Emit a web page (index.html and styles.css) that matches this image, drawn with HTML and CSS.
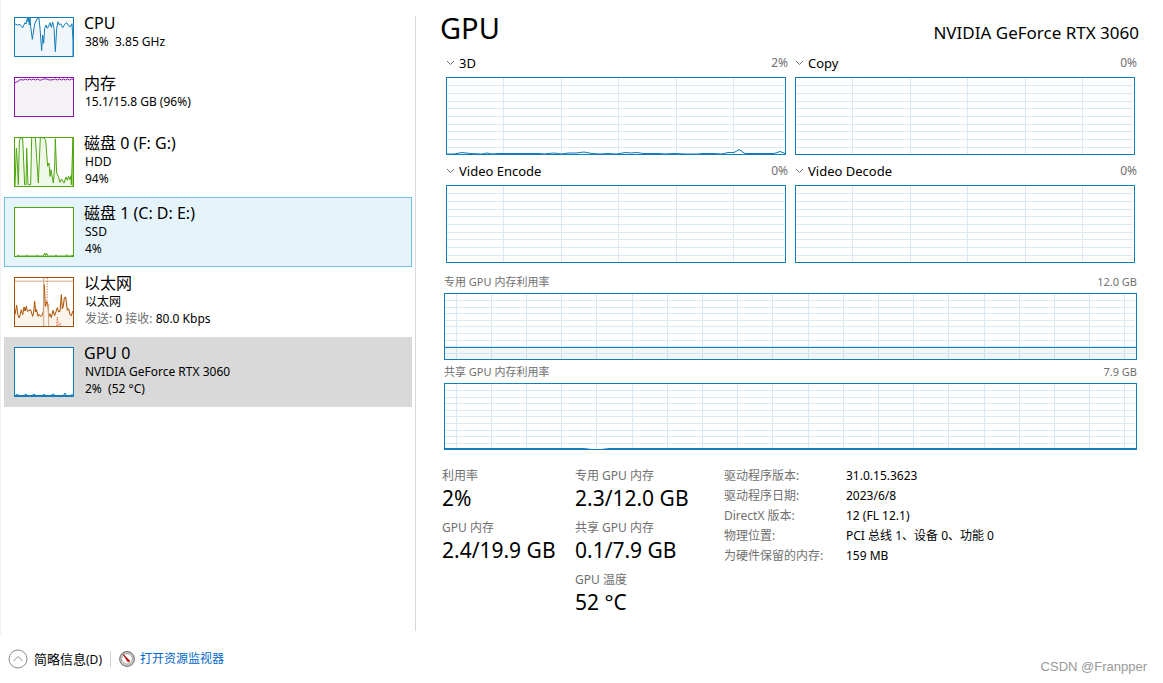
FILE: index.html
```
<!DOCTYPE html>
<html lang="zh-CN">
<head>
  <meta charset="UTF-8">
  <meta name="viewport" content="width=device-width, initial-scale=1.0">
  <title>任务管理器</title>
  <link rel="stylesheet" href="styles.css">
</head>
<body>
  <svg class="defs" aria-hidden="true">
    <defs>
      <path id="gridEngine" d="M57.5 0V78M115.5 0V78M172.5 0V78M230.5 0V78M287.5 0V78M0 8.5H338M0 16.5H338M0 24.5H338M0 31.5H338M0 39.5H338M0 47.5H338M0 54.5H338M0 62.5H338M0 70.5H338"/>
      <path id="gridMemory" d="M12.5 0V67M47.5 0V67M82.5 0V67M117.5 0V67M152.5 0V67M188.5 0V67M223.5 0V67M258.5 0V67M293.5 0V67M328.5 0V67M364.5 0V67M399.5 0V67M434.5 0V67M469.5 0V67M504.5 0V67M540.5 0V67M575.5 0V67M610.5 0V67M645.5 0V67M680.5 0V67M0 7.5H691M0 14.5H691M0 20.5H691M0 27.5H691M0 33.5H691M0 40.5H691M0 47.5H691M0 53.5H691M0 60.5H691"/>
      <path id="chevron" d="M1 1L4.5 4.5L8 1"/>
    </defs>
  </svg>

  <div class="content">
    <nav class="sidebar">
      <button type="button" class="item">
        <svg class="thumb cpu" viewBox="0 0 180 120">
          <path class="area" d="M0 19L10 24L18 22L26 32L33 17L36 21L40 4L42 14L44 2L46 24L48 2L50 29L55 67L62 21L70 4H75L78 34L83 101L86 54L89 79L92 34L96 24L100 34L104 27L108 17L112 31L116 15L120 34L124 104L128 34L132 14L136 24L140 20L146 32L152 22L158 17L164 27L170 29L174 20L177 71V120H0Z"/>
          <rect x="1.5" y="1.5" width="177" height="117"/>
        </svg>
        <span class="info">
          <span class="name">CPU</span>
          <span class="sub">38%&nbsp; 3.85 GHz</span>
        </span>
      </button>
      <button type="button" class="item">
        <svg class="thumb memory" viewBox="0 0 180 120">
          <path class="area" d="M0 19L8 15L12 13L18 8L30 9L34 6L40 9L46 6L52 9L58 6L64 9L70 6L76 9L82 9L88 6L98 6L106 9L118 8L124 6L130 9L136 6L142 9L148 6L154 9L160 6L166 9L172 6L180 8V120H0Z"/>
          <rect x="1.5" y="1.5" width="177" height="117"/>
        </svg>
        <span class="info">
          <span class="name">内存</span>
          <span class="sub">15.1/15.8 GB (96%)</span>
        </span>
      </button>
      <button type="button" class="item">
        <svg class="thumb tall disk" viewBox="0 0 180 150">
          <path class="area" d="M3 143L7 33L9 60L13 143L16 12L20 2L26 4L32 143H36L38 33L42 143H50L53 1H64L73 138L79 1L90 3L95 8L101 88L105 78L108 118L111 98L118 138L122 90L124 5L128 108L133 118L138 136L143 126L150 138L156 120L160 130L164 118L168 128L171 116L172 143L177 3V150H3Z"/>
          <rect x="1.5" y="1.5" width="177" height="147"/>
        </svg>
        <span class="info">
          <span class="name">磁盘 0 (F: G:)</span>
          <span class="sub">HDD</span>
          <span class="sub">94%</span>
        </span>
      </button>
      <button type="button" class="item hover">
        <svg class="thumb tall disk" viewBox="0 0 180 150">
          <rect class="blank" x="1.5" y="1.5" width="177" height="147"/>
          <path class="area" d="M8 147L12 144L16 147H36L40 144L44 147H66L70 144L74 147H88L92 138L95 146L98 139L101 146L104 147H122L126 144L130 147H154L158 142L162 147H170L174 144L177 147"/>
        </svg>
        <span class="info">
          <span class="name">磁盘 1 (C: D: E:)</span>
          <span class="sub">SSD</span>
          <span class="sub">4%</span>
        </span>
      </button>
      <button type="button" class="item">
        <svg class="thumb tall ethernet" viewBox="0 0 180 150">
          <path class="area" d="M0 120L4 108L8 85L12 115L16 123L22 98L26 113L30 90L33 102L37 88L40 103L45 100L50 98L56 118L59 105L62 73L65 105L68 98L72 118L76 112L80 118L84 116L88 103L91 23L94 88L98 73L102 85L104 120L108 110L112 122L117 100L122 116L130 92L134 105L138 103L142 53L145 95L148 88L151 62L155 60L160 100L164 95L168 113L172 116L176 103L180 110V150H0Z"/>
          <path class="soft" d="M3 12.500H177M89 3V147M104 80V147"/>
          <path class="dots" d="M99.500 3V90M128 147L130 120L133 147L138 138L141 147"/>
          <rect x="1.5" y="1.5" width="177" height="147"/>
        </svg>
        <span class="info">
          <span class="name">以太网</span>
          <span class="sub">以太网</span>
          <span class="sub"><span class="dim">发送:</span> 0 <span class="dim">接收:</span> 80.0 Kbps</span>
        </span>
      </button>
      <button type="button" class="item selected">
        <svg class="thumb tall cpu" viewBox="0 0 180 150">
          <rect class="blank" x="1.5" y="1.5" width="177" height="147"/>
          <path class="area" d="M3 145.500H177M3 146L10 142L16 146H30L36 141L40 146H54L60 141L66 146H84L90 142L96 146H110L118 141L124 146H148L153 138L157 146H170L176 141"/>
        </svg>
        <span class="info">
          <span class="name">GPU 0</span>
          <span class="sub">NVIDIA GeForce RTX 3060</span>
          <span class="sub">2%&nbsp; (52 °C)</span>
        </span>
      </button>
    </nav>

    <main class="detail">
      <header class="title">
        <h1>GPU</h1>
        <h2>NVIDIA GeForce RTX 3060</h2>
      </header>

      <div class="engines">
        <section class="engine">
          <div class="engine-head">
            <svg class="chevron" viewBox="0 0 9 6"><use href="#chevron"/></svg>
            <select aria-label="引擎 1"><option>3D</option></select>
            <span class="percent">2%</span>
          </div>
          <svg class="chart" viewBox="0 0 340 78" preserveAspectRatio="none">
            <use class="grid" href="#gridEngine"/>
            <path class="usage" d="M1 77L8 77L16 75.500L24 76.500L36 77L41 76L46 77L52 76.500H94L98 77L108 76L116 77L122 76H130L138 75L146 76.500L154 77L162 76.500L170 77L180 75.500L185 76L191 75.500L197 76.500H214L218 77L228 76.500L240 77L252 77L256 76.500H268L276 77L282 75.500H288L293 72.500L299 76.500H328L334 74.500L339 76.500V78H1Z"/>
            <rect x="0.5" y="0.5" width="339" height="77"/>
          </svg>
        </section>
        <section class="engine">
          <div class="engine-head">
            <svg class="chevron" viewBox="0 0 9 6"><use href="#chevron"/></svg>
            <select aria-label="引擎 2"><option>Copy</option></select>
            <span class="percent">0%</span>
          </div>
          <svg class="chart" viewBox="0 0 340 78" preserveAspectRatio="none">
            <use class="grid" href="#gridEngine"/>
            <rect x="0.5" y="0.5" width="339" height="77"/>
          </svg>
        </section>
        <section class="engine">
          <div class="engine-head">
            <svg class="chevron" viewBox="0 0 9 6"><use href="#chevron"/></svg>
            <select aria-label="引擎 3"><option>Video Encode</option></select>
            <span class="percent">0%</span>
          </div>
          <svg class="chart" viewBox="0 0 340 78" preserveAspectRatio="none">
            <use class="grid" href="#gridEngine"/>
            <rect x="0.5" y="0.5" width="339" height="77"/>
          </svg>
        </section>
        <section class="engine">
          <div class="engine-head">
            <svg class="chevron" viewBox="0 0 9 6"><use href="#chevron"/></svg>
            <select aria-label="引擎 4"><option>Video Decode</option></select>
            <span class="percent">0%</span>
          </div>
          <svg class="chart" viewBox="0 0 340 78" preserveAspectRatio="none">
            <use class="grid" href="#gridEngine"/>
            <rect x="0.5" y="0.5" width="339" height="77"/>
          </svg>
        </section>
      </div>

      <section class="memory-chart">
        <div class="memory-head"><span>专用 GPU 内存利用率</span><span>12.0 GB</span></div>
        <svg class="chart low" viewBox="0 0 693 67" preserveAspectRatio="none">
          <use class="grid" href="#gridMemory"/>
          <path class="usage" d="M0 54.500H693V67H0Z"/>
          <rect x="0.5" y="0.5" width="692" height="66"/>
        </svg>
      </section>
      <section class="memory-chart">
        <div class="memory-head"><span>共享 GPU 内存利用率</span><span>7.9 GB</span></div>
        <svg class="chart low" viewBox="0 0 693 67" preserveAspectRatio="none">
          <use class="grid" href="#gridMemory"/>
          <path class="usage" d="M0 65.500H693"/>
          <path class="dip" d="M140 65L148 66H157L165 65Z"/>
          <rect x="0.5" y="0.5" width="692" height="66"/>
        </svg>
      </section>

      <div class="stats">
        <dl class="numbers">
          <dt>利用率</dt>
          <dd>2%</dd>
          <dt>GPU 内存</dt>
          <dd>2.4/19.9 GB</dd>
        </dl>
        <dl class="numbers wide">
          <dt>专用 GPU 内存</dt>
          <dd>2.3/12.0 GB</dd>
          <dt>共享 GPU 内存</dt>
          <dd>0.1/7.9 GB</dd>
          <dt>GPU 温度</dt>
          <dd>52 °C</dd>
        </dl>
        <table class="driver">
          <tr><th scope="row">驱动程序版本:</th><td>31.0.15.3623</td></tr>
          <tr><th scope="row">驱动程序日期:</th><td>2023/6/8</td></tr>
          <tr><th scope="row">DirectX 版本:</th><td>12 (FL 12.1)</td></tr>
          <tr><th scope="row">物理位置:</th><td>PCI 总线 1、设备 0、功能 0</td></tr>
          <tr><th scope="row">为硬件保留的内存:</th><td>159 MB</td></tr>
        </table>
      </div>
    </main>
  </div>

  <footer class="footer">
    <button type="button" class="fewer">
      <svg class="circle" viewBox="0 0 20 20">
        <circle cx="10" cy="10" r="9"/>
        <path d="M5.500 12L10 7.500L14.500 12"/>
      </svg>
      <span>简略信息<span class="key">(D)</span></span>
    </button>
    <a href="#" class="monitor">
      <svg class="gauge" viewBox="0 0 16 16">
        <circle cx="8" cy="8" r="7.300" fill="#e4e4e4" stroke="#777" stroke-width="1.200"/>
        <circle cx="8" cy="8" r="5.400" fill="#fff" stroke="#a09a90" stroke-width="1"/>
        <path d="M4.500 11.500A5 5 0 0 0 11.500 11.500" fill="none" stroke="#c9c1b0" stroke-width="1.500"/>
        <path d="M4.200 3.400L10.800 10L9 11Z" fill="#d01010" stroke="#b00808" stroke-width="0.800"/>
      </svg>
      <span>打开资源监视器</span>
    </a>
    <span class="watermark">CSDN @Franpper</span>
  </footer>
</body>
</html>
```
FILE: styles.css
```
* {
  box-sizing: border-box;
}

body {
  margin: 0;
  min-height: 100vh;
  display: flex;
  flex-direction: column;
  background: #fff;
  color: #000;
  font-family: "Noto Sans", "Noto Sans CJK SC", sans-serif;
  font-size: 12px;
}

button, select {
  font: inherit;
  color: inherit;
  background: none;
  border: none;
  padding: 0;
}

h1, h2, dl, dd {
  margin: 0;
  font-weight: normal;
}

.defs {
  position: absolute;
  width: 0;
  height: 0;
}

.content {
  flex: 1;
  display: flex;
  border-left: 1px solid #f0f0f0;
}

/* sidebar */
.sidebar {
  flex: none;
  width: 411px;
  padding: 7px 0 0 3px;
}

.item {
  display: flex;
  align-items: flex-start;
  gap: 10px;
  width: 100%;
  padding: 5px 9px 9px;
  border: 1px solid transparent;
  text-align: left;
}

.item.hover {
  background: #e5f3fb;
  border-color: #70c0e7;
}

.item.selected {
  background: #d9d9d9;
}

.thumb {
  flex: none;
  width: 60px;
  height: 40px;
  margin-top: 4px;
  background: #fff;
  fill: none;
  stroke-width: 3px;
}

.thumb.tall {
  height: 50px;
}

.thumb rect {
  shape-rendering: crispEdges;
}

.cpu { stroke: #117dbb; }
.cpu .area { fill: #f1f6fa; }
.memory { stroke: #8b12ae; }
.memory .area { fill: #f4f2f4; }
.disk { stroke: #4da60c; }
.disk .area { fill: #eff7e9; }
.ethernet { stroke: #a74f01; }
.ethernet .area { fill: #fcf3eb; }
.ethernet .soft { stroke: #d3a780; }
.ethernet .dots { stroke: #e0673a; stroke-dasharray: 4 4; }

.info {
  display: flex;
  flex-direction: column;
}

.name {
  font-size: 16px;
  line-height: 20px;
}

.sub {
  line-height: 17px;
  padding-left: 1px;
}

.dim {
  color: #707070;
}

/* detail pane */
.content::after {
  content: "";
  order: 1;
  margin: 16px 0 4px 3px;
  border-left: 1px solid #d9d9d9;
}

.detail {
  order: 2;
  flex: 1;
  min-width: 0;
  padding: 0 26px 0 28px;
}

.title {
  display: flex;
  justify-content: space-between;
  align-items: baseline;
  height: 47px;
  padding-top: 8px;
  margin: 0 -2px 0 -4px;
}

h1 {
  font-size: 29px;
  line-height: 40px;
}

h2 {
  font-size: 17px;
}

.engines {
  display: grid;
  grid-template-columns: 1fr 1fr;
  column-gap: 9px;
  padding: 0 2px;
}

.engine-head {
  display: flex;
  align-items: center;
  height: 30px;
  padding-top: 1px;
  margin-right: -2px;
}

.chevron {
  width: 9px;
  height: 6px;
  margin-right: 4px;
  fill: none;
  stroke: #707070;
}

.engine-head select {
  appearance: none;
  font-size: 13px;
  line-height: 20px;
}

.percent {
  margin-left: auto;
  color: #707070;
}

.chart {
  display: block;
  width: 100%;
  height: 78px;
  fill: none;
  stroke: #117dbb;
}

.chart.low {
  height: 67px;
}

.chart rect, .low .usage, .grid {
  shape-rendering: crispEdges;
}

.grid {
  stroke: #d9eaf4;
}

.usage {
  fill: rgba(17, 125, 187, 0.06);
}

.dip {
  fill: #fff;
  stroke: none;
}

.engines + .memory-chart {
  margin-top: 7px;
}

.memory-head {
  display: flex;
  justify-content: space-between;
  padding-top: 1px;
  font-size: 11px;
  line-height: 22px;
  color: #707070;
}

.stats {
  display: flex;
  margin: 16px 0 0 -2px;
}

.numbers {
  width: 133px;
}

.numbers.wide {
  width: 149px;
}

.numbers dt {
  line-height: 20px;
  color: #707070;
}

.numbers dd {
  font-size: 21px;
  line-height: 24px;
  margin-bottom: 8px;
  white-space: nowrap;
}

.driver {
  align-self: flex-start;
  border-collapse: collapse;
  line-height: 20px;
}

.driver th, .driver td {
  padding: 0;
  text-align: left;
  font-weight: normal;
  white-space: nowrap;
}

.driver th {
  width: 122px;
  color: #707070;
}

/* bottom bar */
.footer {
  display: flex;
  align-items: center;
  height: 48px;
  padding: 0 16px 0 8px;
}

.fewer {
  display: flex;
  align-items: center;
  gap: 6px;
  font-size: 13px;
  line-height: 14px;
}

.key {
  font-size: 12px;
}

.circle {
  width: 20px;
  height: 20px;
  fill: none;
  stroke: #8a8a8a;
}

.monitor {
  display: flex;
  align-items: center;
  gap: 5px;
  margin-left: 8px;
  padding-left: 8px;
  border-left: 1px solid #d0d0d0;
  line-height: 14px;
  color: #0066cc;
  text-decoration: none;
}

.gauge {
  width: 16px;
  height: 16px;
}

.watermark {
  margin: 14px 0 0 auto;
  font-family: "Liberation Sans", sans-serif;
  font-size: 13px;
  color: #999;
}
```
